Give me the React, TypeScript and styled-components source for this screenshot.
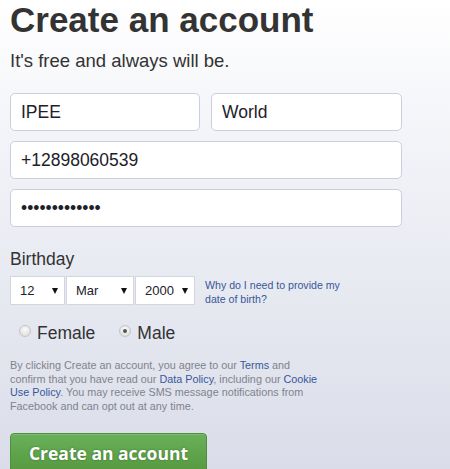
import React from 'react';
import styled, { createGlobalStyle } from 'styled-components';

const GlobalStyle = createGlobalStyle`
  html, body {
    margin: 0;
    padding: 0;
  }
  body {
    min-height: 469px;
    background: linear-gradient(#ffffff 0, #f4f5f9 120px, #dadde9 469px);
    font-family: "Liberation Sans", Arial, sans-serif;
    color: #333;
  }
`;

const Page = styled.div`
  width: 392px;
  padding: 0 0 0 10px;
  display: flex;
  flex-direction: column;
`;

const Title = styled.h1`
  margin: 0;
  font-size: 35px;
  line-height: 40px;
  font-weight: bold;
  color: #333;
`;

const Subtitle = styled.p`
  margin: 10px 0 0;
  font-size: 18.5px;
  line-height: 22px;
  color: #333;
`;

const Fields = styled.div`
  margin-top: 21px;
  display: flex;
  flex-direction: column;
  gap: 10px;
`;

const NameRow = styled.div`
  display: grid;
  grid-template-columns: 190px 191px;
  column-gap: 11px;
`;

const TextInput = styled.input`
  box-sizing: border-box;
  width: 100%;
  height: 38px;
  margin: 0;
  padding: 0 10px;
  border: 1px solid #c9cfdc;
  border-radius: 5px;
  background: #fff;
  font-family: "Liberation Sans", Arial, sans-serif;
  font-size: 17.5px;
  color: #1d2129;
  outline: none;
`;

const Label = styled.div`
  margin-top: 22px;
  font-size: 17.5px;
  line-height: 21px;
  color: #333;
`;

const BirthdayRow = styled.div`
  margin-top: 6px;
  display: flex;
  align-items: flex-start;
`;

const Selects = styled.div`
  display: flex;
  gap: 1px;
`;

const SelectWrap = styled.div<{ $width: number }>`
  position: relative;
  width: ${(p) => p.$width}px;
  height: 29px;

  &::after {
    content: '';
    position: absolute;
    right: 7px;
    top: 12px;
    border-left: 3px solid transparent;
    border-right: 3px solid transparent;
    border-top: 6px solid #111;
    pointer-events: none;
  }
`;

const Select = styled.select`
  appearance: none;
  box-sizing: border-box;
  width: 100%;
  height: 100%;
  margin: 0;
  padding: 0 0 0 9px;
  border: 1px solid #d3d6df;
  border-radius: 0;
  background: #fff;
  font-family: "Liberation Sans", Arial, sans-serif;
  font-size: 13px;
  color: #1d2129;
  outline: none;
`;

const Why = styled.a`
  margin: 3px 0 0 10px;
  width: 145px;
  font-size: 10.6px;
  line-height: 13.5px;
  color: #365899;
  text-decoration: none;
`;

const GenderRow = styled.div`
  margin-top: 16px;
  padding-left: 9px;
  display: flex;
  gap: 24px;
  font-size: 17.5px;
  line-height: 22px;
  color: #333;
`;

const Option = styled.label`
  display: flex;
  align-items: flex-start;
  gap: 6px;
`;

const Radio = styled.span<{ $checked?: boolean }>`
  position: relative;
  box-sizing: border-box;
  width: 12px;
  height: 12px;
  margin-top: 3px;
  border-radius: 50%;
  border: 1px solid #c4c4c4;
  background: radial-gradient(circle at 50% 35%, #fbfbfb 0, #e2e2e2 70%, #d4d4d4 100%);

  &::after {
    content: '';
    display: ${(p) => (p.$checked ? 'block' : 'none')};
    position: absolute;
    left: 3px;
    top: 3px;
    width: 4px;
    height: 4px;
    border-radius: 50%;
    background: #555;
  }
`;

const Legal = styled.p`
  margin: 15px 0 0;
  width: 322px;
  font-size: 10.8px;
  line-height: 13.5px;
  color: #7f838c;

  a {
    color: #365899;
    text-decoration: none;
  }
`;

const SubmitButton = styled.button`
  margin-top: 20px;
  width: 197px;
  height: 40px;
  padding: 0;
  border: 1px solid #4f8f3f;
  border-radius: 4px;
  background: linear-gradient(#68b15a, #56983f);
  box-shadow: inset 0 1px 0 rgba(255, 255, 255, 0.15);
  color: #fff;
  font-family: "Open Sans", "Liberation Sans", sans-serif;
  font-size: 17.5px;
  font-weight: bold;
  line-height: 36px;
  text-shadow: 0 0 2px rgba(40, 70, 30, 0.6);
  cursor: pointer;
`;

const App: React.FC = () => {
  return (
    <>
      <GlobalStyle />
      <Page>
        <Title>Create an account</Title>
        <Subtitle>It's free and always will be.</Subtitle>

        <Fields>
          <NameRow>
            <TextInput defaultValue="IPEE" aria-label="First name" />
            <TextInput defaultValue="World" aria-label="Last name" />
          </NameRow>
          <TextInput defaultValue="+12898060539" aria-label="Mobile number" />
          <TextInput type="password" defaultValue="abcdefghijklm" aria-label="New password" />
        </Fields>

        <Label>Birthday</Label>
        <BirthdayRow>
          <Selects>
            <SelectWrap $width={55}>
              <Select defaultValue="12" aria-label="Day">
                <option>12</option>
              </Select>
            </SelectWrap>
            <SelectWrap $width={68}>
              <Select defaultValue="Mar" aria-label="Month">
                <option>Mar</option>
              </Select>
            </SelectWrap>
            <SelectWrap $width={60}>
              <Select defaultValue="2000" aria-label="Year">
                <option>2000</option>
              </Select>
            </SelectWrap>
          </Selects>
          <Why href="#">Why do I need to provide my date of birth?</Why>
        </BirthdayRow>

        <GenderRow>
          <Option>
            <Radio />
            Female
          </Option>
          <Option>
            <Radio $checked />
            Male
          </Option>
        </GenderRow>

        <Legal>
          By clicking Create an account, you agree to our <a href="#">Terms</a> and<br />
          confirm that you have read our <a href="#">Data Policy</a>, including our <a href="#">Cookie</a>
          <br />
          <a href="#">Use Policy</a>. You may receive SMS message notifications from<br />
          Facebook and can opt out at any time.
        </Legal>

        <SubmitButton>Create an account</SubmitButton>
      </Page>
    </>
  );
};

export default App;
